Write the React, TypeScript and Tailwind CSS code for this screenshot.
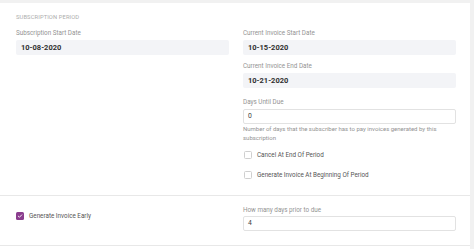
const font = { fontFamily: "Roboto, 'Liberation Sans', sans-serif" };

function Label({ children }: { children: React.ReactNode }) {
  return <div className="text-[6.3px] leading-[8px] text-[#939393] mb-[3px]">{children}</div>;
}

function FilledInput({ value }: { value: string }) {
  return (
    <div className="h-[15px] rounded-[2px] bg-[#f3f4f7] px-[5px] flex items-center text-[7.5px] font-bold text-[#2f2f2f]">
      {value}
    </div>
  );
}

function BorderInput({ value }: { value: string }) {
  return (
    <div className="h-[15px] rounded-[2px] border border-[#e2e2e2] bg-white px-[4px] flex items-center text-[6.8px] text-[#444]">
      {value}
    </div>
  );
}

function Check({ label, checked }: { label: string; checked?: boolean }) {
  return (
    <div className="flex items-center gap-[5px]">
      {checked ? (
        <div className="w-[8px] h-[8px] rounded-[1.5px] bg-[#8b3d8e] flex items-center justify-center">
          <svg width="6" height="6" viewBox="0 0 12 12" fill="none">
            <path d="M2.5 6.2l2.4 2.3 4.6-4.8" stroke="white" strokeWidth="1.8" strokeLinecap="round" strokeLinejoin="round" />
          </svg>
        </div>
      ) : (
        <div className="w-[8px] h-[8px] rounded-[1.5px] border border-[#cfcfcf] bg-white" />
      )}
      <span className="text-[6.3px] leading-[8px] text-[#555]">{label}</span>
    </div>
  );
}

export default function App() {
  return (
    <div className="w-[474px] h-[249px] bg-[#f1f1f1] pt-[3px] pr-[4px] overflow-hidden" style={font}>
      <div className="bg-white h-[246px]">
        <div className="pl-[16px] pr-[14px] pt-[10px]">
          <div className="text-[5.8px] leading-[8px] uppercase text-[#adadad] tracking-[0.1px]">Subscription Period</div>
          <div className="grid grid-cols-[213px_213px] gap-x-[14px] mt-[8px]">
            <div>
              <Label>Subscription Start Date</Label>
              <FilledInput value="10-08-2020" />
            </div>
            <div className="flex flex-col">
              <Label>Current Invoice Start Date</Label>
              <FilledInput value="10-15-2020" />
              <div className="mt-[7px]">
                <Label>Current Invoice End Date</Label>
                <FilledInput value="10-21-2020" />
              </div>
              <div className="mt-[10px]">
                <Label>Days Until Due</Label>
                <BorderInput value="0" />
                <div className="text-[6px] leading-[9px] text-[#939393] pr-[10px]">
                  Number of days that the subscriber has to pay invoices generated by this subscription
                </div>
              </div>
              <div className="mt-[9px] flex flex-col gap-[12px] pl-[1px]">
                <Check label="Cancel At End Of Period" />
                <Check label="Generate Invoice At Beginning Of Period" />
              </div>
            </div>
          </div>
        </div>
        <div className="mt-[16px] border-t border-[#e8e8e8]" />
        <div className="pl-[16px] pr-[14px] grid grid-cols-[213px_213px] gap-x-[14px] pt-[10px] h-[49px]">
          <div className="pt-[6px]">
            <Check label="Generate Invoice Early" checked />
          </div>
          <div>
            <div className="text-[6.3px] leading-[8px] text-[#939393] mb-[2px]">How many days prior to due</div>
            <BorderInput value="4" />
          </div>
        </div>
        <div className="border-t border-[#e8e8e8]" />
      </div>
    </div>
  );
}
